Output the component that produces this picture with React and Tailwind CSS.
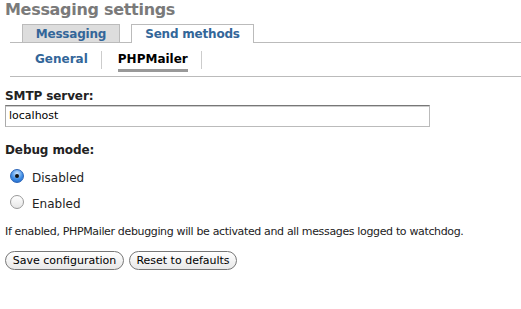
export default function App() {
  const ui = { fontFamily: '"DejaVu Sans", "Lucida Grande", sans-serif' };
  return (
    <div className="w-[521px] h-[309px] bg-white overflow-hidden relative" style={{ fontFamily: '"DejaVu Sans", Verdana, sans-serif' }}>
      <h1 className="absolute left-[5px] top-[0px] text-[16px] font-bold text-[#7a7a7a] leading-[20px] tracking-[-0.3px]">Messaging settings</h1>
      <div className="pt-[24px]">
        {/* primary tabs */}
        <div className="ml-[10px] flex items-end border-b border-[#bbb] h-[19px] pl-[12px] gap-[11px]">
          <div className="h-[18px] w-[98px] bg-[#dddddd] border border-b-0 border-[#bbb] text-[12px] font-bold text-[#336699] leading-[16px] tracking-[-0.2px] flex items-center justify-center">Messaging</div>
          <div className="h-[19px] w-[123px] bg-white border border-b-0 border-[#bbb] text-[12px] font-bold text-[#336699] leading-[16px] tracking-[-0.2px] flex items-center justify-center mb-[-1px]">Send methods</div>
        </div>
        {/* secondary tabs */}
        <div className="ml-[10px] flex items-center h-[34px] border-b border-[#bbb] pl-[25px]">
          <span className="text-[12px] font-bold text-[#336699] leading-[15px]">General</span>
          <span className="w-px h-[18px] bg-[#ccc] ml-[13px]"></span>
          <span className="ml-[16px] text-[12px] font-bold text-black leading-[15px] relative">PHPMailer<span className="absolute left-0 right-0 top-[17px] h-[3px] bg-[#999]"></span></span>
          <span className="w-px h-[18px] bg-[#ccc] ml-[13px]"></span>
        </div>
        <div className="pl-[5px] pt-[12px]">
          <div className="text-[12px] font-bold text-[#222] leading-[15px] tracking-[-0.1px]">SMTP server:</div>
          <div className="mt-[1px] w-[425px] h-[22px] border border-[#bbb] border-t-[#777] border-l-[#aaa] shadow-[inset_0_1px_0_#ccc] flex items-center pl-[3px] text-[11px] text-black" style={ui}>localhost</div>
          <div className="mt-[16px] text-[12px] font-bold text-[#222] leading-[15px] tracking-[-0.1px]">Debug mode:</div>
          <div className="mt-[11px] flex flex-col gap-[12px] pl-[5px]">
            <div className="flex items-start gap-[8px] h-[14px]">
              <span className="shrink-0 w-[14px] h-[14px] rounded-full border border-[#2a64b8] bg-[radial-gradient(circle_at_50%_30%,#cfe6ff,#3f8ee6_55%,#1d5fc0)] flex items-center justify-center">
                <span className="w-[4px] h-[4px] rounded-full bg-[#111]"></span>
              </span>
              <span className="text-[12px] text-[#222] leading-[15px] mt-[2px]">Disabled</span>
            </div>
            <div className="flex items-start gap-[8px] h-[14px]">
              <span className="shrink-0 w-[14px] h-[14px] rounded-full border border-[#999] bg-[linear-gradient(#fff,#e6e6e6)]"></span>
              <span className="text-[12px] text-[#222] leading-[15px] mt-[2px]">Enabled</span>
            </div>
          </div>
          <div className="mt-[16px] text-[11px] text-[#222] leading-[14px] tracking-[-0.35px]">If enabled, PHPMailer debugging will be activated and all messages logged to watchdog.</div>
          <div className="mt-[12px] flex gap-[5px]">
            <button className="h-[19px] w-[119px] rounded-full border border-[#777] bg-[linear-gradient(#fff,#e8e8e8)] text-[11px] leading-[14px] text-black" style={ui}>Save configuration</button>
            <button className="h-[19px] w-[108px] rounded-full border border-[#777] bg-[linear-gradient(#fff,#e8e8e8)] text-[11px] leading-[14px] text-black" style={ui}>Reset to defaults</button>
          </div>
        </div>
      </div>
    </div>
  );
}
